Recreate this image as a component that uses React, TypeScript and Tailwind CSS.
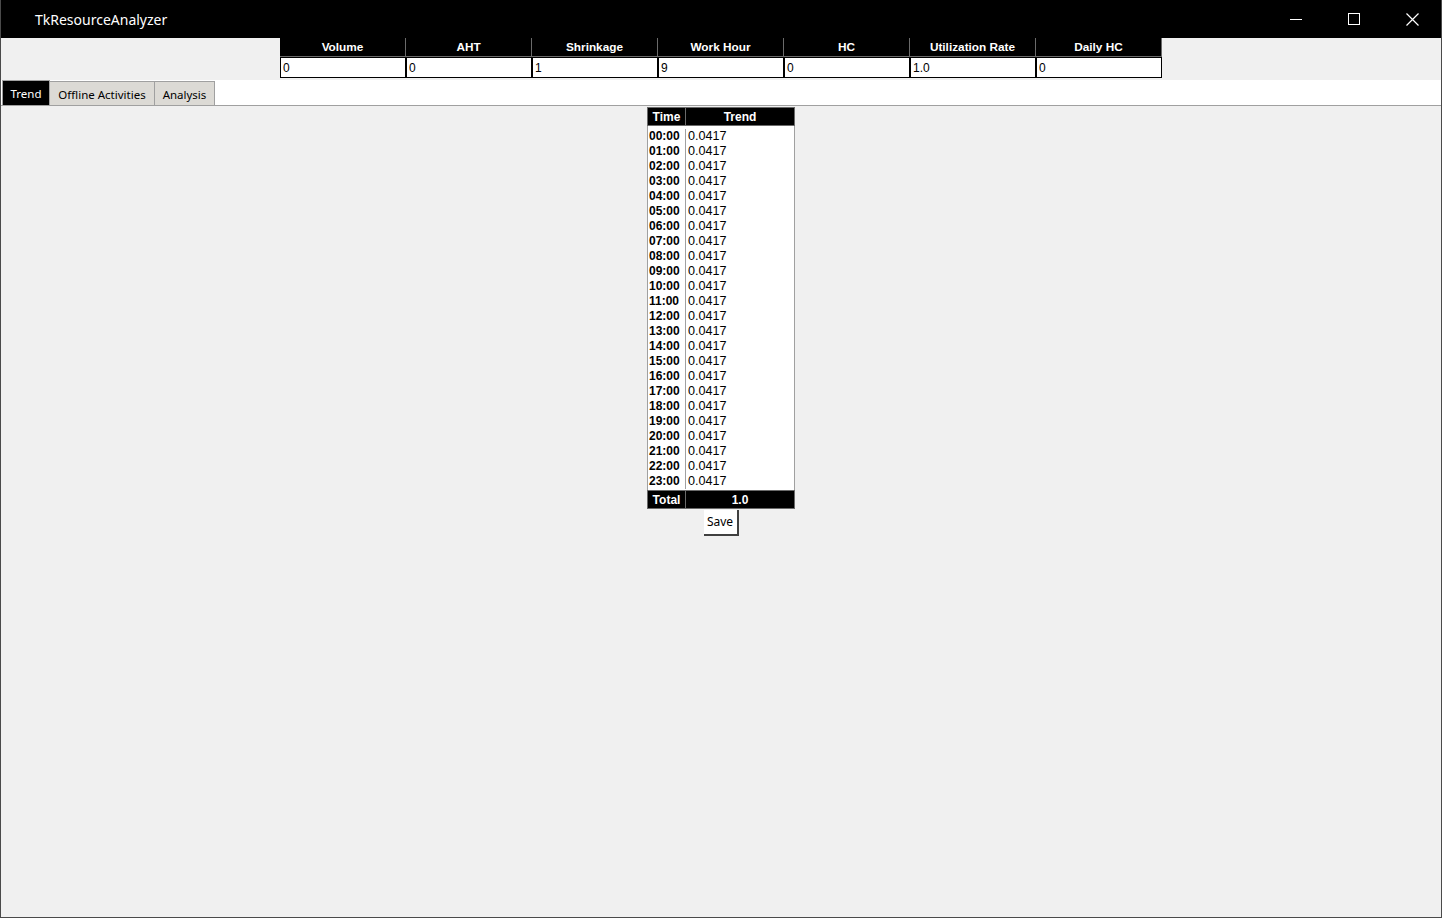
import React from 'react';

const fields = [
  { label: 'Volume', value: '0' },
  { label: 'AHT', value: '0' },
  { label: 'Shrinkage', value: '1' },
  { label: 'Work Hour', value: '9' },
  { label: 'HC', value: '0' },
  { label: 'Utilization Rate', value: '1.0' },
  { label: 'Daily HC', value: '0' },
];

const hours = Array.from({ length: 24 }, (_, i) => `${String(i).padStart(2, '0')}:00`);

const App: React.FC = () => {
  return (
    <div className="w-[1442px] h-[918px] flex flex-col bg-[#f0f0f0] border-x border-b border-[#4a4a4a] overflow-hidden font-['Liberation_Sans',Arial,sans-serif]">
      {/* title bar */}
      <div className="h-[38px] shrink-0 bg-black flex items-center text-white">
        <span className="pl-[34px] text-[14px] font-['Noto_Sans',sans-serif]">TkResourceAnalyzer</span>
        <div className="ml-auto flex h-full">
          <div className="w-[58px] flex items-center justify-center">
            <div className="w-[12px] h-px bg-white" />
          </div>
          <div className="w-[58px] flex items-center justify-center">
            <div className="w-[12px] h-[12px] border border-white" />
          </div>
          <div className="w-[58px] flex items-center justify-center">
            <svg width="13" height="13" viewBox="0 0 13 13">
              <path d="M0.5 0.5 L12.5 12.5 M12.5 0.5 L0.5 12.5" stroke="white" strokeWidth="1.2" />
            </svg>
          </div>
        </div>
      </div>

      {/* parameter grid */}
      <div className="h-[42px] shrink-0 flex pl-[279px]">
        {fields.map((f) => (
          <div key={f.label} className="w-[126px] flex flex-col">
            <div className="h-[19px] pt-px bg-black border-r border-b border-[#6a6a6a] text-white text-[11.8px] font-bold flex items-center justify-center">
              {f.label}
            </div>
            <div className="h-[21px] bg-white border border-black text-[12px] text-black flex items-center pl-[2px]">
              {f.value}
            </div>
          </div>
        ))}
      </div>

      {/* tabs */}
      <div className="h-[26px] shrink-0 bg-white flex items-end pl-[1px] border-b border-[#a0a0a0] font-['Noto_Sans',sans-serif] text-[11.5px]">
        <div className="h-[25px] w-[48px] pt-[2px] bg-black text-white flex items-center justify-center border border-[#a0a0a0] border-b-0">Trend</div>
        <div className="h-[24px] w-[105px] pt-[2px] bg-[#dcdad5] text-black flex items-center justify-center border-r border-t border-[#a0a0a0]">Offline Activities</div>
        <div className="h-[24px] w-[60px] pt-[2px] bg-[#dcdad5] text-black flex items-center justify-center border-r border-t border-[#a0a0a0]">Analysis</div>
      </div>

      {/* content */}
      <div className="flex-1 flex flex-col items-center pt-[1px]">
        <div className="w-[148px] flex flex-col text-[12px]">
          <div className="h-[19px] flex bg-black text-white font-bold border border-[#6a6a6a]">
            <div className="w-[38px] flex items-center justify-center border-r border-[#6a6a6a]">Time</div>
            <div className="flex-1 flex items-center justify-center">Trend</div>
          </div>
          <div className="flex bg-white border-l border-r border-[#a0a0a0] pt-[3px] pb-px">
            <div className="w-[38px] flex flex-col border-r border-[#a0a0a0] font-bold">
              {hours.map((h) => (
                <div key={h} className="h-[15px] leading-[15px] pl-[1px]">{h}</div>
              ))}
            </div>
            <div className="flex-1 flex flex-col text-[12.6px]">
              {hours.map((h) => (
                <div key={h} className="h-[15px] leading-[15px] pl-[2px]">0.0417</div>
              ))}
            </div>
          </div>
          <div className="h-[19px] flex bg-black text-white font-bold border border-[#6a6a6a]">
            <div className="w-[38px] flex items-center justify-center border-r border-[#6a6a6a]">Total</div>
            <div className="flex-1 flex items-center justify-center">1.0</div>
          </div>
        </div>
        <button className="mt-[1px] w-[35px] h-[26px] bg-white border-r-2 border-b-2 border-[#404040] text-[12px] font-['Noto_Sans',sans-serif] text-black flex items-center justify-center">
          Save
        </button>
      </div>
    </div>
  );
};

export default App;
